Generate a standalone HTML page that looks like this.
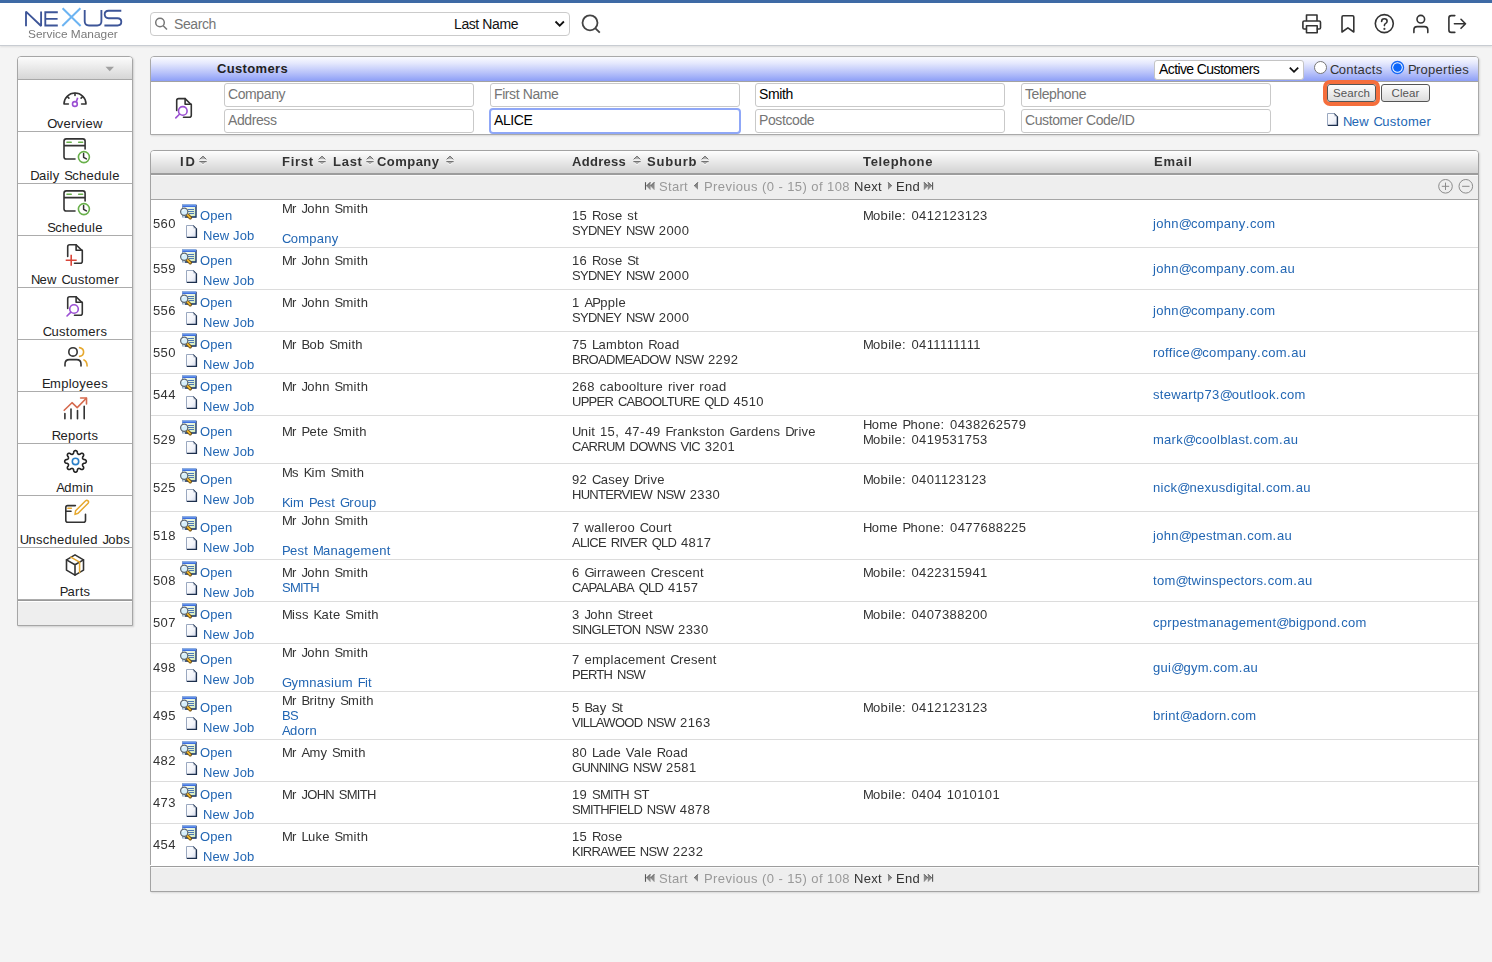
<!DOCTYPE html><html><head><meta charset="utf-8"><style>
*{box-sizing:border-box;margin:0;padding:0}
html,body{width:1492px;height:962px;overflow:hidden;background:#f4f4f4;font-family:"Liberation Sans",sans-serif;color:#333;font-size:13px}
.a{position:absolute}
.t{position:absolute;line-height:15px;height:15px;white-space:nowrap;letter-spacing:.12px;color:#333}
.lk{color:#2266b3}
.hd{position:absolute;font-weight:bold;line-height:15px;white-space:nowrap;letter-spacing:.3px;color:#333}
.sbt{position:absolute;left:17px;width:116px;text-align:center;line-height:15px;white-space:nowrap;letter-spacing:.1px;color:#222}
.inp{position:absolute;height:24px;width:251px;border:1px solid #c9c9c9;border-radius:3px;background:#fff}
.ph{position:absolute;font-size:14px;line-height:15px;white-space:nowrap;color:#757575;letter-spacing:-.4px}
.val{color:#000}
.rb{position:absolute;left:0;width:1327px;border-bottom:1px solid #ddd}
.pg{position:absolute;white-space:nowrap;line-height:15px;letter-spacing:.3px}
</style></head><body>
<div class="a" style="left:0;top:0;width:1492px;height:3px;background:#3e6aa5"></div>
<div class="a" style="left:0;top:3px;width:1492px;height:42px;background:#fff;box-shadow:0 1px 0 #c8ccd2,0 2px 2px rgba(0,0,0,.09)"></div>
<div class="a" style="left:150px;top:12px;width:420px;height:24px;border:1px solid #cbcbcb;border-radius:4px;background:#fff"></div>
<div class="ph" style="left:174px;top:17px">Search</div>
<div class="ph val" style="left:454px;top:17px;color:#111">Last Name</div>
<div class="a" style="left:17px;top:56px;width:116px;height:570px;border:1px solid #a6a6a6;border-radius:4px 4px 0 0;background:#fff;box-shadow:1px 1px 2px rgba(0,0,0,.15)"></div>
<div class="a" style="left:18px;top:57px;width:114px;height:23px;background:linear-gradient(#fcfcfc,#d6d6d6);border-bottom:1px solid #a8a8a8;border-radius:3px 3px 0 0"></div>
<div class="a" style="left:18px;top:131px;width:114px;height:1px;background:#acacac"></div>
<div class="a" style="left:18px;top:183px;width:114px;height:1px;background:#acacac"></div>
<div class="a" style="left:18px;top:235px;width:114px;height:1px;background:#acacac"></div>
<div class="a" style="left:18px;top:287px;width:114px;height:1px;background:#acacac"></div>
<div class="a" style="left:18px;top:339px;width:114px;height:1px;background:#acacac"></div>
<div class="a" style="left:18px;top:391px;width:114px;height:1px;background:#acacac"></div>
<div class="a" style="left:18px;top:443px;width:114px;height:1px;background:#acacac"></div>
<div class="a" style="left:18px;top:495px;width:114px;height:1px;background:#acacac"></div>
<div class="a" style="left:18px;top:547px;width:114px;height:1px;background:#acacac"></div>
<div class="a" style="left:18px;top:599px;width:114px;height:1px;background:#acacac"></div>
<div class="a" style="left:18px;top:600px;width:114px;height:1px;background:#999"></div>
<div class="a" style="left:18px;top:602px;width:114px;height:23px;background:#eee"></div>
<div class="sbt" style="top:116px;letter-spacing:0"><span style="letter-spacing:-0.72px">O</span><span style="letter-spacing:0.28px">verview</span></div>
<div class="sbt" style="top:168px;letter-spacing:0"><span style="letter-spacing:-0.72px">D</span><span style="letter-spacing:0.28px">aily</span><span style="letter-spacing:1.13px"> </span><span style="letter-spacing:-0.72px">S</span><span style="letter-spacing:0.28px">chedule</span></div>
<div class="sbt" style="top:220px;letter-spacing:0"><span style="letter-spacing:-0.72px">S</span><span style="letter-spacing:0.28px">chedule</span></div>
<div class="sbt" style="top:272px;letter-spacing:0"><span style="letter-spacing:-0.72px">N</span><span style="letter-spacing:0.28px">ew</span><span style="letter-spacing:1.13px"> </span><span style="letter-spacing:-0.72px">C</span><span style="letter-spacing:0.28px">ustomer</span></div>
<div class="sbt" style="top:324px;letter-spacing:0"><span style="letter-spacing:-0.72px">C</span><span style="letter-spacing:0.28px">ustomers</span></div>
<div class="sbt" style="top:376px;letter-spacing:0"><span style="letter-spacing:-0.72px">E</span><span style="letter-spacing:0.28px">mployees</span></div>
<div class="sbt" style="top:428px;letter-spacing:0"><span style="letter-spacing:-0.72px">R</span><span style="letter-spacing:0.28px">eports</span></div>
<div class="sbt" style="top:480px;letter-spacing:0"><span style="letter-spacing:-0.72px">A</span><span style="letter-spacing:0.28px">dmin</span></div>
<div class="sbt" style="top:532px;letter-spacing:0"><span style="letter-spacing:-0.72px">U</span><span style="letter-spacing:0.28px">nscheduled</span><span style="letter-spacing:1.13px"> </span><span style="letter-spacing:-0.72px">J</span><span style="letter-spacing:0.28px">obs</span></div>
<div class="sbt" style="top:584px;letter-spacing:0"><span style="letter-spacing:-0.72px">P</span><span style="letter-spacing:0.28px">arts</span></div>
<div class="a" style="left:150px;top:56px;width:1329px;height:79px;border:1px solid #a9a9a9;border-radius:4px 4px 0 0;background:#fff;box-shadow:1px 1px 2px rgba(0,0,0,.12)"></div>
<div class="a" style="left:151px;top:57px;width:1327px;height:25px;background:linear-gradient(#fafbff 0%,#e6e9fd 25%,#b9c3fa 65%,#8d9ff7 100%);border-bottom:1px solid #a2a2a2;border-radius:3px 3px 0 0"></div>
<div class="hd" style="left:217px;top:61px;letter-spacing:.35px;color:#222">Customers</div>
<div class="a" style="left:1154px;top:60px;width:150px;height:20px;border:1px solid #c4c4c4;border-radius:3px;background:#fff"></div>
<div class="ph" style="left:1159px;top:62px;color:#000;letter-spacing:-.6px">Active Customers</div>
<div class="t" style="left:1330px;top:62px;color:#333"><span style="letter-spacing:-0.72px">C</span><span style="letter-spacing:0.28px">ontacts</span></div>
<div class="t" style="left:1408px;top:62px;color:#333"><span style="letter-spacing:-0.72px">P</span><span style="letter-spacing:0.28px">roperties</span></div>
<div class="a" style="left:1314px;top:61px;width:13px;height:13px;border:1px solid #777;border-radius:50%;background:#fff"></div>
<svg class="a" style="left:1390px;top:60px" width="15" height="15"><circle cx="7.5" cy="7.5" r="6" fill="#fff" stroke="#1769f5" stroke-width="1.4"/><circle cx="7.5" cy="7.5" r="4.3" fill="#0b66fa"/></svg>
<div class="inp" style="left:224px;top:83px;width:250px"></div>
<div class="ph" style="left:228px;top:87px;">Company</div>
<div class="inp" style="left:490px;top:83px;width:250px"></div>
<div class="ph" style="left:494px;top:87px;">First Name</div>
<div class="inp" style="left:755px;top:83px;width:250px"></div>
<div class="ph" style="left:759px;top:87px;color:#000">Smith</div>
<div class="inp" style="left:1021px;top:83px;width:250px"></div>
<div class="ph" style="left:1025px;top:87px;">Telephone</div>
<div class="inp" style="left:224px;top:109px;width:250px"></div>
<div class="ph" style="left:228px;top:113px;">Address</div>
<div class="inp" style="left:489px;top:108px;width:252px;height:26px;border:2px solid #8fa7f7;border-radius:4px"></div>
<div class="ph" style="left:494px;top:113px;color:#000">ALICE</div>
<div class="inp" style="left:755px;top:109px;width:250px"></div>
<div class="ph" style="left:759px;top:113px;">Postcode</div>
<div class="inp" style="left:1021px;top:109px;width:250px"></div>
<div class="ph" style="left:1025px;top:113px;">Customer Code/ID</div>
<div class="a" style="left:1323px;top:80px;width:57px;height:26px;border:4px solid #f56e3c;border-radius:7px"></div>
<div class="a" style="left:1327px;top:84px;width:49px;height:18px;border:1px solid #555;border-radius:3px;background:linear-gradient(#fdfdfd,#dcdcdc)"></div>
<div class="a" style="left:1381px;top:84px;width:49px;height:18px;border:1px solid #555;border-radius:3px;background:linear-gradient(#fdfdfd,#dcdcdc)"></div>
<div class="a" style="left:1327px;top:86px;width:49px;text-align:center;font-size:11.5px;line-height:14px;color:#555;letter-spacing:.1px">Search</div>
<div class="a" style="left:1381px;top:86px;width:49px;text-align:center;font-size:11.5px;line-height:14px;color:#555;letter-spacing:.1px">Clear</div>
<div class="t lk" style="left:1343px;top:114px"><span style="letter-spacing:-0.72px">N</span><span style="letter-spacing:0.28px">ew</span><span style="letter-spacing:1.13px"> </span><span style="letter-spacing:-0.72px">C</span><span style="letter-spacing:0.28px">ustomer</span></div>
<div class="a" style="left:150px;top:150px;width:1329px;height:742px;border:1px solid #a3a3a3;border-radius:4px 4px 0 0;background:#fff;box-shadow:1px 1px 2px rgba(0,0,0,.12)"></div>
<div class="a" style="left:151px;top:151px;width:1327px;height:24px;background:linear-gradient(#fefefe,#d2d2d2);border-bottom:2px solid #9c9c9c;border-radius:3px 3px 0 0"></div>
<div class="a" style="left:151px;top:175px;width:1327px;height:24px;background:#eeeeee;border-top:1px solid #fafafa"></div>
<div class="a" style="left:151px;top:199px;width:1327px;height:1px;background:#a5a5a5"></div>
<div class="a" style="left:0;top:0;width:1492px;height:962px;will-change:transform">
<div class="hd" style="left:180px;top:154px;letter-spacing:1.8px">ID</div>
<div class="hd" style="left:282px;top:154px;letter-spacing:0.75px">First</div>
<div class="hd" style="left:333px;top:154px;letter-spacing:0.73px">Last</div>
<div class="hd" style="left:377px;top:154px;letter-spacing:0.45px">Company</div>
<div class="hd" style="left:572px;top:154px;letter-spacing:0.3px">Address</div>
<div class="hd" style="left:647px;top:154px;letter-spacing:0.8px">Suburb</div>
<div class="hd" style="left:863px;top:154px;letter-spacing:0.67px">Telephone</div>
<div class="hd" style="left:1154px;top:154px;letter-spacing:0.8px">Email</div>
<div class="pg" style="left:659px;top:179px;color:#999">Start</div>
<div class="pg" style="left:704px;top:179px;color:#999;letter-spacing:.42px">Previous (0 - 15) of 108</div>
<div class="pg" style="left:854px;top:179px;color:#333">Next</div>
<div class="pg" style="left:896px;top:179px;color:#333">End</div>
<div class="a" style="left:151px;top:247px;width:1327px;height:1px;background:#dcdcdc"></div>
<div class="t" style="left:153px;top:216.0px"><span style="letter-spacing:0.39px">560</span></div>
<div class="t" style="left:282px;top:201.0px"><span style="letter-spacing:-0.72px">M</span><span style="letter-spacing:0.28px">r</span><span style="letter-spacing:1.13px"> </span><span style="letter-spacing:-0.72px">J</span><span style="letter-spacing:0.28px">ohn</span><span style="letter-spacing:1.13px"> </span><span style="letter-spacing:-0.72px">S</span><span style="letter-spacing:0.28px">mith</span></div>
<div class="t lk" style="left:282px;top:231.0px"><span style="letter-spacing:-0.72px">C</span><span style="letter-spacing:0.28px">ompany</span></div>
<div class="t" style="left:572px;top:208.0px"><span style="letter-spacing:0.39px">15</span><span style="letter-spacing:1.13px"> </span><span style="letter-spacing:-0.72px">R</span><span style="letter-spacing:0.28px">ose</span><span style="letter-spacing:1.13px"> </span><span style="letter-spacing:0.28px">st</span></div>
<div class="t" style="left:572px;top:223.0px"><span style="letter-spacing:-0.72px">SYDNEY</span><span style="letter-spacing:1.13px"> </span><span style="letter-spacing:-0.72px">NSW</span><span style="letter-spacing:1.13px"> </span><span style="letter-spacing:0.39px">2000</span></div>
<div class="t" style="left:863px;top:208.0px"><span style="letter-spacing:-0.72px">M</span><span style="letter-spacing:0.28px">obile</span><span style="letter-spacing:1.13px">: </span><span style="letter-spacing:0.39px">0412123123</span></div>
<div class="t lk" style="left:1153px;top:216.0px"><span style="letter-spacing:0.28px">john</span><span style="letter-spacing:-1.0px">@</span><span style="letter-spacing:0.28px">company</span><span style="letter-spacing:0.8px">.</span><span style="letter-spacing:0.28px">com</span></div>
<div class="t lk" style="left:200px;top:208.0px">Open</div>
<div class="t lk" style="left:203px;top:228.0px">New Job</div>
<div class="a" style="left:151px;top:289px;width:1327px;height:1px;background:#dcdcdc"></div>
<div class="t" style="left:153px;top:261.0px"><span style="letter-spacing:0.39px">559</span></div>
<div class="t" style="left:282px;top:253.0px"><span style="letter-spacing:-0.72px">M</span><span style="letter-spacing:0.28px">r</span><span style="letter-spacing:1.13px"> </span><span style="letter-spacing:-0.72px">J</span><span style="letter-spacing:0.28px">ohn</span><span style="letter-spacing:1.13px"> </span><span style="letter-spacing:-0.72px">S</span><span style="letter-spacing:0.28px">mith</span></div>
<div class="t" style="left:572px;top:253.0px"><span style="letter-spacing:0.39px">16</span><span style="letter-spacing:1.13px"> </span><span style="letter-spacing:-0.72px">R</span><span style="letter-spacing:0.28px">ose</span><span style="letter-spacing:1.13px"> </span><span style="letter-spacing:-0.72px">S</span><span style="letter-spacing:0.28px">t</span></div>
<div class="t" style="left:572px;top:268.0px"><span style="letter-spacing:-0.72px">SYDNEY</span><span style="letter-spacing:1.13px"> </span><span style="letter-spacing:-0.72px">NSW</span><span style="letter-spacing:1.13px"> </span><span style="letter-spacing:0.39px">2000</span></div>
<div class="t lk" style="left:1153px;top:261.0px"><span style="letter-spacing:0.28px">john</span><span style="letter-spacing:-1.0px">@</span><span style="letter-spacing:0.28px">company</span><span style="letter-spacing:0.8px">.</span><span style="letter-spacing:0.28px">com</span><span style="letter-spacing:0.8px">.</span><span style="letter-spacing:0.28px">au</span></div>
<div class="t lk" style="left:200px;top:253.0px">Open</div>
<div class="t lk" style="left:203px;top:273.0px">New Job</div>
<div class="a" style="left:151px;top:331px;width:1327px;height:1px;background:#dcdcdc"></div>
<div class="t" style="left:153px;top:303.0px"><span style="letter-spacing:0.39px">556</span></div>
<div class="t" style="left:282px;top:295.0px"><span style="letter-spacing:-0.72px">M</span><span style="letter-spacing:0.28px">r</span><span style="letter-spacing:1.13px"> </span><span style="letter-spacing:-0.72px">J</span><span style="letter-spacing:0.28px">ohn</span><span style="letter-spacing:1.13px"> </span><span style="letter-spacing:-0.72px">S</span><span style="letter-spacing:0.28px">mith</span></div>
<div class="t" style="left:572px;top:295.0px"><span style="letter-spacing:0.39px">1</span><span style="letter-spacing:1.13px"> </span><span style="letter-spacing:-0.72px">AP</span><span style="letter-spacing:0.28px">pple</span></div>
<div class="t" style="left:572px;top:310.0px"><span style="letter-spacing:-0.72px">SYDNEY</span><span style="letter-spacing:1.13px"> </span><span style="letter-spacing:-0.72px">NSW</span><span style="letter-spacing:1.13px"> </span><span style="letter-spacing:0.39px">2000</span></div>
<div class="t lk" style="left:1153px;top:303.0px"><span style="letter-spacing:0.28px">john</span><span style="letter-spacing:-1.0px">@</span><span style="letter-spacing:0.28px">company</span><span style="letter-spacing:0.8px">.</span><span style="letter-spacing:0.28px">com</span></div>
<div class="t lk" style="left:200px;top:295.0px">Open</div>
<div class="t lk" style="left:203px;top:315.0px">New Job</div>
<div class="a" style="left:151px;top:373px;width:1327px;height:1px;background:#dcdcdc"></div>
<div class="t" style="left:153px;top:345.0px"><span style="letter-spacing:0.39px">550</span></div>
<div class="t" style="left:282px;top:337.0px"><span style="letter-spacing:-0.72px">M</span><span style="letter-spacing:0.28px">r</span><span style="letter-spacing:1.13px"> </span><span style="letter-spacing:-0.72px">B</span><span style="letter-spacing:0.28px">ob</span><span style="letter-spacing:1.13px"> </span><span style="letter-spacing:-0.72px">S</span><span style="letter-spacing:0.28px">mith</span></div>
<div class="t" style="left:572px;top:337.0px"><span style="letter-spacing:0.39px">75</span><span style="letter-spacing:1.13px"> </span><span style="letter-spacing:-0.72px">L</span><span style="letter-spacing:0.28px">ambton</span><span style="letter-spacing:1.13px"> </span><span style="letter-spacing:-0.72px">R</span><span style="letter-spacing:0.28px">oad</span></div>
<div class="t" style="left:572px;top:352.0px"><span style="letter-spacing:-0.72px">BROADMEADOW</span><span style="letter-spacing:1.13px"> </span><span style="letter-spacing:-0.72px">NSW</span><span style="letter-spacing:1.13px"> </span><span style="letter-spacing:0.39px">2292</span></div>
<div class="t" style="left:863px;top:337.0px"><span style="letter-spacing:-0.72px">M</span><span style="letter-spacing:0.28px">obile</span><span style="letter-spacing:1.13px">: </span><span style="letter-spacing:0.39px">0411111111</span></div>
<div class="t lk" style="left:1153px;top:345.0px"><span style="letter-spacing:0.28px">roffice</span><span style="letter-spacing:-1.0px">@</span><span style="letter-spacing:0.28px">company</span><span style="letter-spacing:0.8px">.</span><span style="letter-spacing:0.28px">com</span><span style="letter-spacing:0.8px">.</span><span style="letter-spacing:0.28px">au</span></div>
<div class="t lk" style="left:200px;top:337.0px">Open</div>
<div class="t lk" style="left:203px;top:357.0px">New Job</div>
<div class="a" style="left:151px;top:415px;width:1327px;height:1px;background:#dcdcdc"></div>
<div class="t" style="left:153px;top:387.0px"><span style="letter-spacing:0.39px">544</span></div>
<div class="t" style="left:282px;top:379.0px"><span style="letter-spacing:-0.72px">M</span><span style="letter-spacing:0.28px">r</span><span style="letter-spacing:1.13px"> </span><span style="letter-spacing:-0.72px">J</span><span style="letter-spacing:0.28px">ohn</span><span style="letter-spacing:1.13px"> </span><span style="letter-spacing:-0.72px">S</span><span style="letter-spacing:0.28px">mith</span></div>
<div class="t" style="left:572px;top:379.0px"><span style="letter-spacing:0.39px">268</span><span style="letter-spacing:1.13px"> </span><span style="letter-spacing:0.28px">caboolture</span><span style="letter-spacing:1.13px"> </span><span style="letter-spacing:0.28px">river</span><span style="letter-spacing:1.13px"> </span><span style="letter-spacing:0.28px">road</span></div>
<div class="t" style="left:572px;top:394.0px"><span style="letter-spacing:-0.72px">UPPER</span><span style="letter-spacing:1.13px"> </span><span style="letter-spacing:-0.72px">CABOOLTURE</span><span style="letter-spacing:1.13px"> </span><span style="letter-spacing:-0.72px">QLD</span><span style="letter-spacing:1.13px"> </span><span style="letter-spacing:0.39px">4510</span></div>
<div class="t lk" style="left:1153px;top:387.0px"><span style="letter-spacing:0.28px">stewartp</span><span style="letter-spacing:0.39px">73</span><span style="letter-spacing:-1.0px">@</span><span style="letter-spacing:0.28px">outlook</span><span style="letter-spacing:0.8px">.</span><span style="letter-spacing:0.28px">com</span></div>
<div class="t lk" style="left:200px;top:379.0px">Open</div>
<div class="t lk" style="left:203px;top:399.0px">New Job</div>
<div class="a" style="left:151px;top:463px;width:1327px;height:1px;background:#dcdcdc"></div>
<div class="t" style="left:153px;top:432.0px"><span style="letter-spacing:0.39px">529</span></div>
<div class="t" style="left:282px;top:424.0px"><span style="letter-spacing:-0.72px">M</span><span style="letter-spacing:0.28px">r</span><span style="letter-spacing:1.13px"> </span><span style="letter-spacing:-0.72px">P</span><span style="letter-spacing:0.28px">ete</span><span style="letter-spacing:1.13px"> </span><span style="letter-spacing:-0.72px">S</span><span style="letter-spacing:0.28px">mith</span></div>
<div class="t" style="left:572px;top:424.0px"><span style="letter-spacing:-0.72px">U</span><span style="letter-spacing:0.28px">nit</span><span style="letter-spacing:1.13px"> </span><span style="letter-spacing:0.39px">15</span><span style="letter-spacing:1.13px">, </span><span style="letter-spacing:0.39px">47</span><span style="letter-spacing:1.13px">-</span><span style="letter-spacing:0.39px">49</span><span style="letter-spacing:1.13px"> </span><span style="letter-spacing:-0.72px">F</span><span style="letter-spacing:0.28px">rankston</span><span style="letter-spacing:1.13px"> </span><span style="letter-spacing:-0.72px">G</span><span style="letter-spacing:0.28px">ardens</span><span style="letter-spacing:1.13px"> </span><span style="letter-spacing:-0.72px">D</span><span style="letter-spacing:0.28px">rive</span></div>
<div class="t" style="left:572px;top:439.0px"><span style="letter-spacing:-0.72px">CARRUM</span><span style="letter-spacing:1.13px"> </span><span style="letter-spacing:-0.72px">DOWNS</span><span style="letter-spacing:1.13px"> </span><span style="letter-spacing:-0.72px">VIC</span><span style="letter-spacing:1.13px"> </span><span style="letter-spacing:0.39px">3201</span></div>
<div class="t" style="left:863px;top:417.0px"><span style="letter-spacing:-0.72px">H</span><span style="letter-spacing:0.28px">ome</span><span style="letter-spacing:1.13px"> </span><span style="letter-spacing:-0.72px">P</span><span style="letter-spacing:0.28px">hone</span><span style="letter-spacing:1.13px">: </span><span style="letter-spacing:0.39px">0438262579</span></div>
<div class="t" style="left:863px;top:432.0px"><span style="letter-spacing:-0.72px">M</span><span style="letter-spacing:0.28px">obile</span><span style="letter-spacing:1.13px">: </span><span style="letter-spacing:0.39px">0419531753</span></div>
<div class="t lk" style="left:1153px;top:432.0px"><span style="letter-spacing:0.28px">mark</span><span style="letter-spacing:-1.0px">@</span><span style="letter-spacing:0.28px">coolblast</span><span style="letter-spacing:0.8px">.</span><span style="letter-spacing:0.28px">com</span><span style="letter-spacing:0.8px">.</span><span style="letter-spacing:0.28px">au</span></div>
<div class="t lk" style="left:200px;top:424.0px">Open</div>
<div class="t lk" style="left:203px;top:444.0px">New Job</div>
<div class="a" style="left:151px;top:511px;width:1327px;height:1px;background:#dcdcdc"></div>
<div class="t" style="left:153px;top:480.0px"><span style="letter-spacing:0.39px">525</span></div>
<div class="t" style="left:282px;top:465.0px"><span style="letter-spacing:-0.72px">M</span><span style="letter-spacing:0.28px">s</span><span style="letter-spacing:1.13px"> </span><span style="letter-spacing:-0.72px">K</span><span style="letter-spacing:0.28px">im</span><span style="letter-spacing:1.13px"> </span><span style="letter-spacing:-0.72px">S</span><span style="letter-spacing:0.28px">mith</span></div>
<div class="t lk" style="left:282px;top:495.0px"><span style="letter-spacing:-0.72px">K</span><span style="letter-spacing:0.28px">im</span><span style="letter-spacing:1.13px"> </span><span style="letter-spacing:-0.72px">P</span><span style="letter-spacing:0.28px">est</span><span style="letter-spacing:1.13px"> </span><span style="letter-spacing:-0.72px">G</span><span style="letter-spacing:0.28px">roup</span></div>
<div class="t" style="left:572px;top:472.0px"><span style="letter-spacing:0.39px">92</span><span style="letter-spacing:1.13px"> </span><span style="letter-spacing:-0.72px">C</span><span style="letter-spacing:0.28px">asey</span><span style="letter-spacing:1.13px"> </span><span style="letter-spacing:-0.72px">D</span><span style="letter-spacing:0.28px">rive</span></div>
<div class="t" style="left:572px;top:487.0px"><span style="letter-spacing:-0.72px">HUNTERVIEW</span><span style="letter-spacing:1.13px"> </span><span style="letter-spacing:-0.72px">NSW</span><span style="letter-spacing:1.13px"> </span><span style="letter-spacing:0.39px">2330</span></div>
<div class="t" style="left:863px;top:472.0px"><span style="letter-spacing:-0.72px">M</span><span style="letter-spacing:0.28px">obile</span><span style="letter-spacing:1.13px">: </span><span style="letter-spacing:0.39px">0401123123</span></div>
<div class="t lk" style="left:1153px;top:480.0px"><span style="letter-spacing:0.28px">nick</span><span style="letter-spacing:-1.0px">@</span><span style="letter-spacing:0.28px">nexusdigital</span><span style="letter-spacing:0.8px">.</span><span style="letter-spacing:0.28px">com</span><span style="letter-spacing:0.8px">.</span><span style="letter-spacing:0.28px">au</span></div>
<div class="t lk" style="left:200px;top:472.0px">Open</div>
<div class="t lk" style="left:203px;top:492.0px">New Job</div>
<div class="a" style="left:151px;top:559px;width:1327px;height:1px;background:#dcdcdc"></div>
<div class="t" style="left:153px;top:528.0px"><span style="letter-spacing:0.39px">518</span></div>
<div class="t" style="left:282px;top:513.0px"><span style="letter-spacing:-0.72px">M</span><span style="letter-spacing:0.28px">r</span><span style="letter-spacing:1.13px"> </span><span style="letter-spacing:-0.72px">J</span><span style="letter-spacing:0.28px">ohn</span><span style="letter-spacing:1.13px"> </span><span style="letter-spacing:-0.72px">S</span><span style="letter-spacing:0.28px">mith</span></div>
<div class="t lk" style="left:282px;top:543.0px"><span style="letter-spacing:-0.72px">P</span><span style="letter-spacing:0.28px">est</span><span style="letter-spacing:1.13px"> </span><span style="letter-spacing:-0.72px">M</span><span style="letter-spacing:0.28px">anagement</span></div>
<div class="t" style="left:572px;top:520.0px"><span style="letter-spacing:0.39px">7</span><span style="letter-spacing:1.13px"> </span><span style="letter-spacing:0.28px">walleroo</span><span style="letter-spacing:1.13px"> </span><span style="letter-spacing:-0.72px">C</span><span style="letter-spacing:0.28px">ourt</span></div>
<div class="t" style="left:572px;top:535.0px"><span style="letter-spacing:-0.72px">ALICE</span><span style="letter-spacing:1.13px"> </span><span style="letter-spacing:-0.72px">RIVER</span><span style="letter-spacing:1.13px"> </span><span style="letter-spacing:-0.72px">QLD</span><span style="letter-spacing:1.13px"> </span><span style="letter-spacing:0.39px">4817</span></div>
<div class="t" style="left:863px;top:520.0px"><span style="letter-spacing:-0.72px">H</span><span style="letter-spacing:0.28px">ome</span><span style="letter-spacing:1.13px"> </span><span style="letter-spacing:-0.72px">P</span><span style="letter-spacing:0.28px">hone</span><span style="letter-spacing:1.13px">: </span><span style="letter-spacing:0.39px">0477688225</span></div>
<div class="t lk" style="left:1153px;top:528.0px"><span style="letter-spacing:0.28px">john</span><span style="letter-spacing:-1.0px">@</span><span style="letter-spacing:0.28px">pestman</span><span style="letter-spacing:0.8px">.</span><span style="letter-spacing:0.28px">com</span><span style="letter-spacing:0.8px">.</span><span style="letter-spacing:0.28px">au</span></div>
<div class="t lk" style="left:200px;top:520.0px">Open</div>
<div class="t lk" style="left:203px;top:540.0px">New Job</div>
<div class="a" style="left:151px;top:601px;width:1327px;height:1px;background:#dcdcdc"></div>
<div class="t" style="left:153px;top:573.0px"><span style="letter-spacing:0.39px">508</span></div>
<div class="t" style="left:282px;top:565.0px"><span style="letter-spacing:-0.72px">M</span><span style="letter-spacing:0.28px">r</span><span style="letter-spacing:1.13px"> </span><span style="letter-spacing:-0.72px">J</span><span style="letter-spacing:0.28px">ohn</span><span style="letter-spacing:1.13px"> </span><span style="letter-spacing:-0.72px">S</span><span style="letter-spacing:0.28px">mith</span></div>
<div class="t lk" style="left:282px;top:580.0px"><span style="letter-spacing:-0.72px">SMITH</span></div>
<div class="t" style="left:572px;top:565.0px"><span style="letter-spacing:0.39px">6</span><span style="letter-spacing:1.13px"> </span><span style="letter-spacing:-0.72px">G</span><span style="letter-spacing:0.28px">irraween</span><span style="letter-spacing:1.13px"> </span><span style="letter-spacing:-0.72px">C</span><span style="letter-spacing:0.28px">rescent</span></div>
<div class="t" style="left:572px;top:580.0px"><span style="letter-spacing:-0.72px">CAPALABA</span><span style="letter-spacing:1.13px"> </span><span style="letter-spacing:-0.72px">QLD</span><span style="letter-spacing:1.13px"> </span><span style="letter-spacing:0.39px">4157</span></div>
<div class="t" style="left:863px;top:565.0px"><span style="letter-spacing:-0.72px">M</span><span style="letter-spacing:0.28px">obile</span><span style="letter-spacing:1.13px">: </span><span style="letter-spacing:0.39px">0422315941</span></div>
<div class="t lk" style="left:1153px;top:573.0px"><span style="letter-spacing:0.28px">tom</span><span style="letter-spacing:-1.0px">@</span><span style="letter-spacing:0.28px">twinspectors</span><span style="letter-spacing:0.8px">.</span><span style="letter-spacing:0.28px">com</span><span style="letter-spacing:0.8px">.</span><span style="letter-spacing:0.28px">au</span></div>
<div class="t lk" style="left:200px;top:565.0px">Open</div>
<div class="t lk" style="left:203px;top:585.0px">New Job</div>
<div class="a" style="left:151px;top:643px;width:1327px;height:1px;background:#dcdcdc"></div>
<div class="t" style="left:153px;top:615.0px"><span style="letter-spacing:0.39px">507</span></div>
<div class="t" style="left:282px;top:607.0px"><span style="letter-spacing:-0.72px">M</span><span style="letter-spacing:0.28px">iss</span><span style="letter-spacing:1.13px"> </span><span style="letter-spacing:-0.72px">K</span><span style="letter-spacing:0.28px">ate</span><span style="letter-spacing:1.13px"> </span><span style="letter-spacing:-0.72px">S</span><span style="letter-spacing:0.28px">mith</span></div>
<div class="t" style="left:572px;top:607.0px"><span style="letter-spacing:0.39px">3</span><span style="letter-spacing:1.13px"> </span><span style="letter-spacing:-0.72px">J</span><span style="letter-spacing:0.28px">ohn</span><span style="letter-spacing:1.13px"> </span><span style="letter-spacing:-0.72px">S</span><span style="letter-spacing:0.28px">treet</span></div>
<div class="t" style="left:572px;top:622.0px"><span style="letter-spacing:-0.72px">SINGLETON</span><span style="letter-spacing:1.13px"> </span><span style="letter-spacing:-0.72px">NSW</span><span style="letter-spacing:1.13px"> </span><span style="letter-spacing:0.39px">2330</span></div>
<div class="t" style="left:863px;top:607.0px"><span style="letter-spacing:-0.72px">M</span><span style="letter-spacing:0.28px">obile</span><span style="letter-spacing:1.13px">: </span><span style="letter-spacing:0.39px">0407388200</span></div>
<div class="t lk" style="left:1153px;top:615.0px"><span style="letter-spacing:0.28px">cprpestmanagement</span><span style="letter-spacing:-1.0px">@</span><span style="letter-spacing:0.28px">bigpond</span><span style="letter-spacing:0.8px">.</span><span style="letter-spacing:0.28px">com</span></div>
<div class="t lk" style="left:200px;top:607.0px">Open</div>
<div class="t lk" style="left:203px;top:627.0px">New Job</div>
<div class="a" style="left:151px;top:691px;width:1327px;height:1px;background:#dcdcdc"></div>
<div class="t" style="left:153px;top:660.0px"><span style="letter-spacing:0.39px">498</span></div>
<div class="t" style="left:282px;top:645.0px"><span style="letter-spacing:-0.72px">M</span><span style="letter-spacing:0.28px">r</span><span style="letter-spacing:1.13px"> </span><span style="letter-spacing:-0.72px">J</span><span style="letter-spacing:0.28px">ohn</span><span style="letter-spacing:1.13px"> </span><span style="letter-spacing:-0.72px">S</span><span style="letter-spacing:0.28px">mith</span></div>
<div class="t lk" style="left:282px;top:675.0px"><span style="letter-spacing:-0.72px">G</span><span style="letter-spacing:0.28px">ymnasium</span><span style="letter-spacing:1.13px"> </span><span style="letter-spacing:-0.72px">F</span><span style="letter-spacing:0.28px">it</span></div>
<div class="t" style="left:572px;top:652.0px"><span style="letter-spacing:0.39px">7</span><span style="letter-spacing:1.13px"> </span><span style="letter-spacing:0.28px">emplacement</span><span style="letter-spacing:1.13px"> </span><span style="letter-spacing:-0.72px">C</span><span style="letter-spacing:0.28px">resent</span></div>
<div class="t" style="left:572px;top:667.0px"><span style="letter-spacing:-0.72px">PERTH</span><span style="letter-spacing:1.13px"> </span><span style="letter-spacing:-0.72px">NSW</span></div>
<div class="t lk" style="left:1153px;top:660.0px"><span style="letter-spacing:0.28px">gui</span><span style="letter-spacing:-1.0px">@</span><span style="letter-spacing:0.28px">gym</span><span style="letter-spacing:0.8px">.</span><span style="letter-spacing:0.28px">com</span><span style="letter-spacing:0.8px">.</span><span style="letter-spacing:0.28px">au</span></div>
<div class="t lk" style="left:200px;top:652.0px">Open</div>
<div class="t lk" style="left:203px;top:672.0px">New Job</div>
<div class="a" style="left:151px;top:739px;width:1327px;height:1px;background:#dcdcdc"></div>
<div class="t" style="left:153px;top:708.0px"><span style="letter-spacing:0.39px">495</span></div>
<div class="t" style="left:282px;top:693.0px"><span style="letter-spacing:-0.72px">M</span><span style="letter-spacing:0.28px">r</span><span style="letter-spacing:1.13px"> </span><span style="letter-spacing:-0.72px">B</span><span style="letter-spacing:0.28px">ritny</span><span style="letter-spacing:1.13px"> </span><span style="letter-spacing:-0.72px">S</span><span style="letter-spacing:0.28px">mith</span></div>
<div class="t lk" style="left:282px;top:708.0px"><span style="letter-spacing:-0.72px">BS</span></div>
<div class="t lk" style="left:282px;top:723.0px"><span style="letter-spacing:-0.72px">A</span><span style="letter-spacing:0.28px">dorn</span></div>
<div class="t" style="left:572px;top:700.0px"><span style="letter-spacing:0.39px">5</span><span style="letter-spacing:1.13px"> </span><span style="letter-spacing:-0.72px">B</span><span style="letter-spacing:0.28px">ay</span><span style="letter-spacing:1.13px"> </span><span style="letter-spacing:-0.72px">S</span><span style="letter-spacing:0.28px">t</span></div>
<div class="t" style="left:572px;top:715.0px"><span style="letter-spacing:-0.72px">VILLAWOOD</span><span style="letter-spacing:1.13px"> </span><span style="letter-spacing:-0.72px">NSW</span><span style="letter-spacing:1.13px"> </span><span style="letter-spacing:0.39px">2163</span></div>
<div class="t" style="left:863px;top:700.0px"><span style="letter-spacing:-0.72px">M</span><span style="letter-spacing:0.28px">obile</span><span style="letter-spacing:1.13px">: </span><span style="letter-spacing:0.39px">0412123123</span></div>
<div class="t lk" style="left:1153px;top:708.0px"><span style="letter-spacing:0.28px">brint</span><span style="letter-spacing:-1.0px">@</span><span style="letter-spacing:0.28px">adorn</span><span style="letter-spacing:0.8px">.</span><span style="letter-spacing:0.28px">com</span></div>
<div class="t lk" style="left:200px;top:700.0px">Open</div>
<div class="t lk" style="left:203px;top:720.0px">New Job</div>
<div class="a" style="left:151px;top:781px;width:1327px;height:1px;background:#dcdcdc"></div>
<div class="t" style="left:153px;top:753.0px"><span style="letter-spacing:0.39px">482</span></div>
<div class="t" style="left:282px;top:745.0px"><span style="letter-spacing:-0.72px">M</span><span style="letter-spacing:0.28px">r</span><span style="letter-spacing:1.13px"> </span><span style="letter-spacing:-0.72px">A</span><span style="letter-spacing:0.28px">my</span><span style="letter-spacing:1.13px"> </span><span style="letter-spacing:-0.72px">S</span><span style="letter-spacing:0.28px">mith</span></div>
<div class="t" style="left:572px;top:745.0px"><span style="letter-spacing:0.39px">80</span><span style="letter-spacing:1.13px"> </span><span style="letter-spacing:-0.72px">L</span><span style="letter-spacing:0.28px">ade</span><span style="letter-spacing:1.13px"> </span><span style="letter-spacing:-0.72px">V</span><span style="letter-spacing:0.28px">ale</span><span style="letter-spacing:1.13px"> </span><span style="letter-spacing:-0.72px">R</span><span style="letter-spacing:0.28px">oad</span></div>
<div class="t" style="left:572px;top:760.0px"><span style="letter-spacing:-0.72px">GUNNING</span><span style="letter-spacing:1.13px"> </span><span style="letter-spacing:-0.72px">NSW</span><span style="letter-spacing:1.13px"> </span><span style="letter-spacing:0.39px">2581</span></div>
<div class="t lk" style="left:200px;top:745.0px">Open</div>
<div class="t lk" style="left:203px;top:765.0px">New Job</div>
<div class="a" style="left:151px;top:823px;width:1327px;height:1px;background:#dcdcdc"></div>
<div class="t" style="left:153px;top:795.0px"><span style="letter-spacing:0.39px">473</span></div>
<div class="t" style="left:282px;top:787.0px"><span style="letter-spacing:-0.72px">M</span><span style="letter-spacing:0.28px">r</span><span style="letter-spacing:1.13px"> </span><span style="letter-spacing:-0.72px">JOHN</span><span style="letter-spacing:1.13px"> </span><span style="letter-spacing:-0.72px">SMITH</span></div>
<div class="t" style="left:572px;top:787.0px"><span style="letter-spacing:0.39px">19</span><span style="letter-spacing:1.13px"> </span><span style="letter-spacing:-0.72px">SMITH</span><span style="letter-spacing:1.13px"> </span><span style="letter-spacing:-0.72px">ST</span></div>
<div class="t" style="left:572px;top:802.0px"><span style="letter-spacing:-0.72px">SMITHFIELD</span><span style="letter-spacing:1.13px"> </span><span style="letter-spacing:-0.72px">NSW</span><span style="letter-spacing:1.13px"> </span><span style="letter-spacing:0.39px">4878</span></div>
<div class="t" style="left:863px;top:787.0px"><span style="letter-spacing:-0.72px">M</span><span style="letter-spacing:0.28px">obile</span><span style="letter-spacing:1.13px">: </span><span style="letter-spacing:0.39px">0404</span><span style="letter-spacing:1.13px"> </span><span style="letter-spacing:0.39px">1010101</span></div>
<div class="t lk" style="left:200px;top:787.0px">Open</div>
<div class="t lk" style="left:203px;top:807.0px">New Job</div>
<div class="a" style="left:151px;top:865px;width:1327px;height:1px;background:#fff"></div>
<div class="t" style="left:153px;top:837.0px"><span style="letter-spacing:0.39px">454</span></div>
<div class="t" style="left:282px;top:829.0px"><span style="letter-spacing:-0.72px">M</span><span style="letter-spacing:0.28px">r</span><span style="letter-spacing:1.13px"> </span><span style="letter-spacing:-0.72px">L</span><span style="letter-spacing:0.28px">uke</span><span style="letter-spacing:1.13px"> </span><span style="letter-spacing:-0.72px">S</span><span style="letter-spacing:0.28px">mith</span></div>
<div class="t" style="left:572px;top:829.0px"><span style="letter-spacing:0.39px">15</span><span style="letter-spacing:1.13px"> </span><span style="letter-spacing:-0.72px">R</span><span style="letter-spacing:0.28px">ose</span></div>
<div class="t" style="left:572px;top:844.0px"><span style="letter-spacing:-0.72px">KIRRAWEE</span><span style="letter-spacing:1.13px"> </span><span style="letter-spacing:-0.72px">NSW</span><span style="letter-spacing:1.13px"> </span><span style="letter-spacing:0.39px">2232</span></div>
<div class="t lk" style="left:200px;top:829.0px">Open</div>
<div class="t lk" style="left:203px;top:849.0px">New Job</div>
<div class="a" style="left:150px;top:865px;width:1329px;height:1px;background:#fff"></div>
<div class="a" style="left:151px;top:866px;width:1327px;height:1px;background:#9d9d9d"></div>
<div class="a" style="left:151px;top:867px;width:1327px;height:24px;background:#eee;border-top:1px solid #fafafa"></div>
<div class="pg" style="left:659px;top:871px;color:#999">Start</div>
<div class="pg" style="left:704px;top:871px;color:#999;letter-spacing:.42px">Previous (0 - 15) of 108</div>
<div class="pg" style="left:854px;top:871px;color:#333">Next</div>
<div class="pg" style="left:896px;top:871px;color:#333">End</div>
</div>

<svg class="a" style="left:0;top:0" width="1492" height="962" viewBox="0 0 1492 962"><g fill="none" stroke-width="1.85" stroke-linecap="butt"><path d="M26,26.2 V11.6 L41.1,26 V11.4" stroke="#3d5598" stroke-linejoin="bevel"/><path d="M57.8,12.2 H45.3 V25.5 H57.8 M45.3,18.8 H57.6" stroke="#3d5598"/><path d="M62.3,26 L80.4,8.3 M62.6,8.3 L80.6,26" stroke="#6cb4f2" stroke-width="2"/><path d="M84.7,10 V21.3 Q84.7,25.5 89,25.5 H97.2 Q101.4,25.5 101.4,21.3 V10" stroke="#3d5598"/><path d="M121.3,10.7 H108.6 Q104.7,10.7 104.7,14.3 Q104.7,18.2 108.6,18.2 H117.5 Q121.3,18.2 121.3,21.8 Q121.3,25.5 117.5,25.5 H104.4" stroke="#3d5598"/></g><g fill="none" stroke="#777" stroke-width="1.5"><circle cx="160" cy="22.5" r="4.3"/><path d="M163.2,25.8 L167,29.5"/></g><path d="M555.5,21.5 L559.7,25.7 L563.9,21.5" fill="none" stroke="#111" stroke-width="1.8"/><g fill="none" stroke="#444" stroke-width="1.8"><circle cx="590" cy="22.8" r="7.5"/><path d="M595.4,28.3 L599.8,32.6"/></g><g fill="none" stroke="#333" stroke-width="1.6" stroke-linecap="round" stroke-linejoin="round" stroke="#444" stroke-width="1.9"><path d="M1306.5,20.5 V15 H1317 V20.5"/><path d="M1306,29 H1304.2 Q1302.9,29 1302.9,27.7 V22.3 Q1302.9,21 1304.2,21 H1319.2 Q1320.5,21 1320.5,22.3 V27.7 Q1320.5,29 1319.2,29 H1317.3"/><rect x="1306.5" y="25.8" width="10.7" height="7"/><path d="M1342,32 V17 Q1342,15.8 1343.2,15.8 H1352.6 Q1353.8,15.8 1353.8,17 V32 L1347.9,27.8 Z"/><circle cx="1384.3" cy="23.6" r="9"/><path d="M1381.6,21.4 Q1381.6,18.8 1384.4,18.8 Q1387.1,18.8 1387.1,21.2 Q1387.1,22.8 1385.4,23.6 Q1384.4,24.1 1384.4,25.6"/><circle cx="1420.8" cy="19.2" r="3.8"/><path d="M1413.9,32.6 V29.8 Q1413.9,26.6 1417.1,26.6 H1424.6 Q1427.8,26.6 1427.8,29.8 V32.6"/><path d="M1454.8,15.6 H1451.3 Q1448.9,15.6 1448.9,18 V30 Q1448.9,32.4 1451.3,32.4 H1454.8"/><path d="M1454.4,23.8 H1465.3 M1461,19.3 L1465.5,23.8 L1461,28.3"/></g><circle cx="1384.4" cy="28.9" r="1.1" fill="#444"/><path d="M105.5,66.8 H114 L109.75,71.2 Z" fill="#a0a0a0"/><g fill="none" stroke="#333" stroke-width="1.6" stroke-linecap="round" stroke-linejoin="round" stroke="#222"><path d="M68.4,104 H64 A11,11 0 0 1 86,104 H81.6" /><path d="M75,93.4 V95.4 M67.4,96.6 L68.9,98.1 M82.6,96.6 L81.1,98.1"/></g><g fill="none" stroke="#9b4fd3" stroke-width="1.6"><circle cx="74.9" cy="104" r="2.4"/><path d="M76.3,101.8 L77.7,97.7"/></g><g fill="none" stroke="#333" stroke-width="1.6" stroke-linecap="round" stroke-linejoin="round" stroke="#333"><path d="M75,159 H66.3 Q64,159 64,156.7 V141.2 Q64,138.9 66.3,138.9 H82.8 Q85.1,138.9 85.1,141.2 V148.9 M64,145.6 H85.1"/></g><g fill="none" stroke="#68b04a" stroke-width="1.6" stroke-linecap="round"><path d="M67,142.3 H71.2 M78.7,142.3 H82.6"/><circle cx="83.9" cy="157.1" r="5.5"/></g><path d="M83.6,153.6 V157.3 L86.4,158.9" fill="none" stroke="#333" stroke-width="1.5" stroke-linecap="round" stroke-linejoin="round"/><g fill="none" stroke="#333" stroke-width="1.6" stroke-linecap="round" stroke-linejoin="round" stroke="#333"><path d="M75,211 H66.3 Q64,211 64,208.7 V193.2 Q64,190.9 66.3,190.9 H82.8 Q85.1,190.9 85.1,193.2 V200.9 M64,197.6 H85.1"/></g><g fill="none" stroke="#68b04a" stroke-width="1.6" stroke-linecap="round"><path d="M67,194.3 H71.2 M78.7,194.3 H82.6"/><circle cx="83.9" cy="209.1" r="5.5"/></g><path d="M83.6,205.6 V209.3 L86.4,210.9" fill="none" stroke="#333" stroke-width="1.5" stroke-linecap="round" stroke-linejoin="round"/><path d="M67.7,256.5 V246.7 Q67.7,244.7 69.7,244.7 H76.10000000000001 L82.3,250.89999999999998 V261.3 Q82.3,263.3 80.3,263.3 H74.5" fill="none" stroke="#333" stroke-width="1.6" stroke-linecap="round" stroke-linejoin="round"/><path d="M76.10000000000001,244.7 V250.29999999999998 H82.3" fill="none" stroke="#333" stroke-width="1.6" stroke-linecap="round" stroke-linejoin="round"/><path d="M71.2,254.8 V265.8 M65.7,260.3 H76.7" stroke="#d9463a" stroke-width="1.6" fill="none"/><path d="M67.7,308.5 V298.7 Q67.7,296.7 69.7,296.7 H76.10000000000001 L82.3,302.9 V313.3 Q82.3,315.3 80.3,315.3 H74.5" fill="none" stroke="#333" stroke-width="1.6" stroke-linecap="round" stroke-linejoin="round"/><path d="M76.10000000000001,296.7 V302.3 H82.3" fill="none" stroke="#333" stroke-width="1.6" stroke-linecap="round" stroke-linejoin="round"/><g fill="none" stroke="#9b4fd3" stroke-width="1.6" stroke-linecap="round"><circle cx="74" cy="309" r="4.3"/><path d="M70.9,312.1 L67,316"/></g><path d="M176.7,110.39999999999999 V100.6 Q176.7,98.6 178.7,98.6 H185.1 L191.29999999999998,104.8 V115.19999999999999 Q191.29999999999998,117.19999999999999 189.29999999999998,117.19999999999999 H183.5" fill="none" stroke="#333" stroke-width="1.6" stroke-linecap="round" stroke-linejoin="round"/><path d="M185.1,98.6 V104.19999999999999 H191.29999999999998" fill="none" stroke="#333" stroke-width="1.6" stroke-linecap="round" stroke-linejoin="round"/><g fill="none" stroke="#9b4fd3" stroke-width="1.6" stroke-linecap="round"><circle cx="182.8" cy="110.9" r="4.3"/><path d="M179.7,114 L175.8,117.9"/></g><g fill="none" stroke="#333" stroke-width="1.6" stroke-linecap="round" stroke-linejoin="round"><circle cx="73" cy="351.9" r="4.2"/><path d="M65,366 V364 Q65,359.6 69.4,359.6 H76.6 Q81,359.6 81,364 V366"/></g><g fill="none" stroke="#e6a82e" stroke-width="1.6" stroke-linecap="round"><path d="M79.6,347.6 Q83.6,348.3 83.6,352 Q83.6,355.7 79.6,356.4"/><path d="M84,359.9 Q87.1,361.3 87.1,366"/></g><g fill="none" stroke="#333" stroke-width="1.6" stroke-linecap="round" stroke-linejoin="round" stroke-linecap="butt"><path d="M64.9,413.6 V418.8 M71,409 V418.8 M77.5,410.6 V418.8 M84.2,406.2 V418.8"/></g><g fill="none" stroke="#d56a4e" stroke-width="1.6" stroke-linecap="round" stroke-linejoin="round"><path d="M64.2,410.3 L72,402.7 L77.2,407.6 L86.3,398.3"/><path d="M80.6,398 H86.5 V404"/></g><polygon points="86.30,461.40 86.30,461.49 86.29,461.59 86.28,461.68 86.26,461.78 86.23,461.87 86.20,461.96 86.17,462.05 86.13,462.14 86.08,462.23 86.03,462.32 85.97,462.41 85.91,462.49 85.84,462.58 85.77,462.66 85.68,462.74 85.60,462.82 85.50,462.89 85.39,462.97 85.28,463.04 85.14,463.10 84.99,463.16 84.78,463.20 84.36,463.20 84.16,463.24 84.00,463.28 83.87,463.33 83.75,463.38 83.64,463.43 83.54,463.48 83.45,463.53 83.36,463.58 83.28,463.63 83.20,463.68 83.13,463.73 83.06,463.78 83.00,463.84 82.94,463.89 82.89,463.94 82.84,464.00 82.79,464.05 82.75,464.11 82.71,464.17 82.67,464.23 82.64,464.29 82.61,464.35 82.59,464.41 82.57,464.47 82.55,464.54 82.54,464.61 82.53,464.68 82.52,464.75 82.52,464.82 82.52,464.90 82.53,464.98 82.53,465.06 82.54,465.15 82.56,465.23 82.58,465.32 82.60,465.42 82.63,465.51 82.66,465.62 82.69,465.72 82.73,465.83 82.78,465.95 82.84,466.08 82.92,466.22 83.04,466.39 83.34,466.69 83.45,466.87 83.52,467.02 83.57,467.16 83.60,467.29 83.63,467.41 83.64,467.54 83.65,467.65 83.65,467.77 83.65,467.88 83.64,467.99 83.62,468.09 83.60,468.19 83.57,468.29 83.54,468.39 83.51,468.48 83.47,468.57 83.42,468.66 83.37,468.74 83.32,468.82 83.26,468.90 83.20,468.97 83.14,469.04 83.07,469.10 83.00,469.16 82.92,469.22 82.84,469.27 82.76,469.32 82.67,469.37 82.58,469.41 82.49,469.44 82.39,469.47 82.29,469.50 82.19,469.52 82.09,469.54 81.98,469.55 81.87,469.55 81.75,469.55 81.64,469.54 81.51,469.53 81.39,469.50 81.26,469.47 81.12,469.42 80.97,469.35 80.79,469.24 80.49,468.94 80.32,468.82 80.18,468.74 80.05,468.68 79.93,468.63 79.82,468.59 79.72,468.56 79.61,468.53 79.52,468.50 79.42,468.48 79.33,468.46 79.25,468.44 79.16,468.43 79.08,468.43 79.00,468.42 78.92,468.42 78.85,468.42 78.78,468.43 78.71,468.44 78.64,468.45 78.57,468.47 78.51,468.49 78.45,468.51 78.39,468.54 78.33,468.57 78.27,468.61 78.21,468.65 78.15,468.69 78.10,468.74 78.04,468.79 77.99,468.84 77.94,468.90 77.88,468.96 77.83,469.03 77.78,469.10 77.73,469.18 77.68,469.26 77.63,469.35 77.58,469.44 77.53,469.54 77.48,469.65 77.43,469.77 77.38,469.90 77.34,470.06 77.30,470.26 77.30,470.68 77.26,470.89 77.20,471.04 77.14,471.18 77.07,471.29 76.99,471.40 76.92,471.50 76.84,471.58 76.76,471.67 76.68,471.74 76.59,471.81 76.51,471.87 76.42,471.93 76.33,471.98 76.24,472.03 76.15,472.07 76.06,472.10 75.97,472.13 75.88,472.16 75.78,472.18 75.69,472.19 75.59,472.20 75.50,472.20 75.41,472.20 75.31,472.19 75.22,472.18 75.12,472.16 75.03,472.13 74.94,472.10 74.85,472.07 74.76,472.03 74.67,471.98 74.58,471.93 74.49,471.87 74.41,471.81 74.32,471.74 74.24,471.67 74.16,471.58 74.08,471.50 74.01,471.40 73.93,471.29 73.86,471.18 73.80,471.04 73.74,470.89 73.70,470.68 73.70,470.26 73.66,470.06 73.62,469.90 73.57,469.77 73.52,469.65 73.47,469.54 73.42,469.44 73.37,469.35 73.32,469.26 73.27,469.18 73.22,469.10 73.17,469.03 73.12,468.96 73.06,468.90 73.01,468.84 72.96,468.79 72.90,468.74 72.85,468.69 72.79,468.65 72.73,468.61 72.67,468.57 72.61,468.54 72.55,468.51 72.49,468.49 72.43,468.47 72.36,468.45 72.29,468.44 72.22,468.43 72.15,468.42 72.08,468.42 72.00,468.42 71.92,468.43 71.84,468.43 71.75,468.44 71.67,468.46 71.58,468.48 71.48,468.50 71.39,468.53 71.28,468.56 71.18,468.59 71.07,468.63 70.95,468.68 70.82,468.74 70.68,468.82 70.51,468.94 70.21,469.24 70.03,469.35 69.88,469.42 69.74,469.47 69.61,469.50 69.49,469.53 69.36,469.54 69.25,469.55 69.13,469.55 69.02,469.55 68.91,469.54 68.81,469.52 68.71,469.50 68.61,469.47 68.51,469.44 68.42,469.41 68.33,469.37 68.24,469.32 68.16,469.27 68.08,469.22 68.00,469.16 67.93,469.10 67.86,469.04 67.80,468.97 67.74,468.90 67.68,468.82 67.63,468.74 67.58,468.66 67.53,468.57 67.49,468.48 67.46,468.39 67.43,468.29 67.40,468.19 67.38,468.09 67.36,467.99 67.35,467.88 67.35,467.77 67.35,467.65 67.36,467.54 67.37,467.41 67.40,467.29 67.43,467.16 67.48,467.02 67.55,466.87 67.66,466.69 67.96,466.39 68.08,466.22 68.16,466.08 68.22,465.95 68.27,465.83 68.31,465.72 68.34,465.62 68.37,465.51 68.40,465.42 68.42,465.32 68.44,465.23 68.46,465.15 68.47,465.06 68.47,464.98 68.48,464.90 68.48,464.82 68.48,464.75 68.47,464.68 68.46,464.61 68.45,464.54 68.43,464.47 68.41,464.41 68.39,464.35 68.36,464.29 68.33,464.23 68.29,464.17 68.25,464.11 68.21,464.05 68.16,464.00 68.11,463.94 68.06,463.89 68.00,463.84 67.94,463.78 67.87,463.73 67.80,463.68 67.72,463.63 67.64,463.58 67.55,463.53 67.46,463.48 67.36,463.43 67.25,463.38 67.13,463.33 67.00,463.28 66.84,463.24 66.64,463.20 66.22,463.20 66.01,463.16 65.86,463.10 65.72,463.04 65.61,462.97 65.50,462.89 65.40,462.82 65.32,462.74 65.23,462.66 65.16,462.58 65.09,462.49 65.03,462.41 64.97,462.32 64.92,462.23 64.87,462.14 64.83,462.05 64.80,461.96 64.77,461.87 64.74,461.78 64.72,461.68 64.71,461.59 64.70,461.49 64.70,461.40 64.70,461.31 64.71,461.21 64.72,461.12 64.74,461.02 64.77,460.93 64.80,460.84 64.83,460.75 64.87,460.66 64.92,460.57 64.97,460.48 65.03,460.39 65.09,460.31 65.16,460.22 65.23,460.14 65.32,460.06 65.40,459.98 65.50,459.91 65.61,459.83 65.72,459.76 65.86,459.70 66.01,459.64 66.22,459.60 66.64,459.60 66.84,459.56 67.00,459.52 67.13,459.47 67.25,459.42 67.36,459.37 67.46,459.32 67.55,459.27 67.64,459.22 67.72,459.17 67.80,459.12 67.87,459.07 67.94,459.02 68.00,458.96 68.06,458.91 68.11,458.86 68.16,458.80 68.21,458.75 68.25,458.69 68.29,458.63 68.33,458.57 68.36,458.51 68.39,458.45 68.41,458.39 68.43,458.33 68.45,458.26 68.46,458.19 68.47,458.12 68.48,458.05 68.48,457.98 68.48,457.90 68.47,457.82 68.47,457.74 68.46,457.65 68.44,457.57 68.42,457.48 68.40,457.38 68.37,457.29 68.34,457.18 68.31,457.08 68.27,456.97 68.22,456.85 68.16,456.72 68.08,456.58 67.96,456.41 67.66,456.11 67.55,455.93 67.48,455.78 67.43,455.64 67.40,455.51 67.37,455.39 67.36,455.26 67.35,455.15 67.35,455.03 67.35,454.92 67.36,454.81 67.38,454.71 67.40,454.61 67.43,454.51 67.46,454.41 67.49,454.32 67.53,454.23 67.58,454.14 67.63,454.06 67.68,453.98 67.74,453.90 67.80,453.83 67.86,453.76 67.93,453.70 68.00,453.64 68.08,453.58 68.16,453.53 68.24,453.48 68.33,453.43 68.42,453.39 68.51,453.36 68.61,453.33 68.71,453.30 68.81,453.28 68.91,453.26 69.02,453.25 69.13,453.25 69.25,453.25 69.36,453.26 69.49,453.27 69.61,453.30 69.74,453.33 69.88,453.38 70.03,453.45 70.21,453.56 70.51,453.86 70.68,453.98 70.82,454.06 70.95,454.12 71.07,454.17 71.18,454.21 71.28,454.24 71.39,454.27 71.48,454.30 71.58,454.32 71.67,454.34 71.75,454.36 71.84,454.37 71.92,454.37 72.00,454.38 72.08,454.38 72.15,454.38 72.22,454.37 72.29,454.36 72.36,454.35 72.43,454.33 72.49,454.31 72.55,454.29 72.61,454.26 72.67,454.23 72.73,454.19 72.79,454.15 72.85,454.11 72.90,454.06 72.96,454.01 73.01,453.96 73.06,453.90 73.12,453.84 73.17,453.77 73.22,453.70 73.27,453.62 73.32,453.54 73.37,453.45 73.42,453.36 73.47,453.26 73.52,453.15 73.57,453.03 73.62,452.90 73.66,452.74 73.70,452.54 73.70,452.12 73.74,451.91 73.80,451.76 73.86,451.62 73.93,451.51 74.01,451.40 74.08,451.30 74.16,451.22 74.24,451.13 74.32,451.06 74.41,450.99 74.49,450.93 74.58,450.87 74.67,450.82 74.76,450.77 74.85,450.73 74.94,450.70 75.03,450.67 75.12,450.64 75.22,450.62 75.31,450.61 75.41,450.60 75.50,450.60 75.59,450.60 75.69,450.61 75.78,450.62 75.88,450.64 75.97,450.67 76.06,450.70 76.15,450.73 76.24,450.77 76.33,450.82 76.42,450.87 76.51,450.93 76.59,450.99 76.68,451.06 76.76,451.13 76.84,451.22 76.92,451.30 76.99,451.40 77.07,451.51 77.14,451.62 77.20,451.76 77.26,451.91 77.30,452.12 77.30,452.54 77.34,452.74 77.38,452.90 77.43,453.03 77.48,453.15 77.53,453.26 77.58,453.36 77.63,453.45 77.68,453.54 77.73,453.62 77.78,453.70 77.83,453.77 77.88,453.84 77.94,453.90 77.99,453.96 78.04,454.01 78.10,454.06 78.15,454.11 78.21,454.15 78.27,454.19 78.33,454.23 78.39,454.26 78.45,454.29 78.51,454.31 78.57,454.33 78.64,454.35 78.71,454.36 78.78,454.37 78.85,454.38 78.92,454.38 79.00,454.38 79.08,454.37 79.16,454.37 79.25,454.36 79.33,454.34 79.42,454.32 79.52,454.30 79.61,454.27 79.72,454.24 79.82,454.21 79.93,454.17 80.05,454.12 80.18,454.06 80.32,453.98 80.49,453.86 80.79,453.56 80.97,453.45 81.12,453.38 81.26,453.33 81.39,453.30 81.51,453.27 81.64,453.26 81.75,453.25 81.87,453.25 81.98,453.25 82.09,453.26 82.19,453.28 82.29,453.30 82.39,453.33 82.49,453.36 82.58,453.39 82.67,453.43 82.76,453.48 82.84,453.53 82.92,453.58 83.00,453.64 83.07,453.70 83.14,453.76 83.20,453.83 83.26,453.90 83.32,453.98 83.37,454.06 83.42,454.14 83.47,454.23 83.51,454.32 83.54,454.41 83.57,454.51 83.60,454.61 83.62,454.71 83.64,454.81 83.65,454.92 83.65,455.03 83.65,455.15 83.64,455.26 83.63,455.39 83.60,455.51 83.57,455.64 83.52,455.78 83.45,455.93 83.34,456.11 83.04,456.41 82.92,456.58 82.84,456.72 82.78,456.85 82.73,456.97 82.69,457.08 82.66,457.18 82.63,457.29 82.60,457.38 82.58,457.48 82.56,457.57 82.54,457.65 82.53,457.74 82.53,457.82 82.52,457.90 82.52,457.98 82.52,458.05 82.53,458.12 82.54,458.19 82.55,458.26 82.57,458.33 82.59,458.39 82.61,458.45 82.64,458.51 82.67,458.57 82.71,458.63 82.75,458.69 82.79,458.75 82.84,458.80 82.89,458.86 82.94,458.91 83.00,458.96 83.06,459.02 83.13,459.07 83.20,459.12 83.28,459.17 83.36,459.22 83.45,459.27 83.54,459.32 83.64,459.37 83.75,459.42 83.87,459.47 84.00,459.52 84.16,459.56 84.36,459.60 84.78,459.60 84.99,459.64 85.14,459.70 85.28,459.76 85.39,459.83 85.50,459.91 85.60,459.98 85.68,460.06 85.77,460.14 85.84,460.22 85.91,460.31 85.97,460.39 86.03,460.48 86.08,460.57 86.13,460.66 86.17,460.75 86.20,460.84 86.23,460.93 86.26,461.02 86.28,461.12 86.29,461.21 86.30,461.31" fill="none" stroke="#222" stroke-width="1.6" stroke-linejoin="round"/><circle cx="75.5" cy="461.4" r="3.2" fill="none" stroke="#2a7fc8" stroke-width="1.6"/><g fill="none" stroke="#333" stroke-width="1.6" stroke-linecap="round" stroke-linejoin="round"><path d="M75.4,505.6 H67.6 Q65.8,505.6 65.8,507.4 V520.2 Q65.8,522.2 67.8,522.2 H83.6 Q85.5,522.2 85.5,520.2 V514.2"/><path d="M65.8,511.2 H71"/></g><g fill="none" stroke="#e6a82e" stroke-width="1.5" stroke-linecap="round" stroke-linejoin="round"><path d="M67.9,508.2 H71.4"/><path d="M75,514.4 L75.6,510.8 L85.6,500.8 Q86.9,499.8 88,500.9 Q89.1,502 88.1,503.2 L78.1,513.2 Z"/></g><g fill="none" stroke="#333" stroke-width="1.6" stroke-linecap="round" stroke-linejoin="round" stroke="#222"><path d="M75,554.9 L83.5,559.9 V570.1 L75,575.1 L66.5,570.1 V559.9 Z"/><path d="M66.5,559.9 L75,564.7 L83.5,559.9 M75,564.7 V575.1"/></g><path d="M70.4,556.8 L79.6,562.1 V573" fill="none" stroke="#e6a82e" stroke-width="1.5"/><defs><linearGradient id="wg" x1="0" y1="0" x2="1" y2="1"><stop offset="0" stop-color="#ffffff"/><stop offset="1" stop-color="#cfe9b8"/></linearGradient><linearGradient id="tb" x1="0" y1="0" x2="0" y2="1"><stop offset="0" stop-color="#8ab4f8"/><stop offset="1" stop-color="#2c5fd6"/></linearGradient><linearGradient id="dg" x1="0" y1="0" x2="1" y2="1"><stop offset="0" stop-color="#ffffff"/><stop offset="0.6" stop-color="#f2f4fa"/><stop offset="1" stop-color="#c9d2e6"/></linearGradient></defs><rect x="182.5" y="204.5" width="13.5" height="12.5" fill="url(#wg)" stroke="#8fa6c8" stroke-width="1"/><path d="M196,205 V217 H185" fill="none" stroke="#1f3a66" stroke-width="1.3"/><rect x="182.5" y="204.5" width="13.5" height="2.5" fill="url(#tb)"/><path d="M188,209.5 H194 M188,211.5 H194 M189,213.5 H194" stroke="#4d77b5" stroke-width="1"/><path d="M186.5,214 L190.3,217.8" stroke="#6b4a10" stroke-width="3.4" stroke-linecap="round"/><path d="M186.7,214.2 L190.1,217.6" stroke="#f0b830" stroke-width="1.8" stroke-linecap="round"/><circle cx="184.2" cy="211.8" r="3.6" fill="#d6eefa" stroke="#5d6670" stroke-width="1.2"/><path d="M182.6,211 Q183,209.6 184.4,209.4" stroke="#fff" stroke-width="1" fill="none"/><path d="M186.5,225.5 H193.2 L196.5,228.8 V237.5 H186.5 Z" fill="url(#dg)" stroke="#9aa8c0" stroke-width="1"/><path d="M196.4,228.6 V237.4 H187" fill="none" stroke="#1c2f4d" stroke-width="1.4"/><path d="M193.2,225.6 L196.5,228.9" fill="none" stroke="#2a3a55" stroke-width="1.1"/><path d="M193.6,226.4 V228.3 H195.6" fill="none" stroke="#c8d0de" stroke-width="0.8"/><rect x="182.5" y="249.5" width="13.5" height="12.5" fill="url(#wg)" stroke="#8fa6c8" stroke-width="1"/><path d="M196,250 V262 H185" fill="none" stroke="#1f3a66" stroke-width="1.3"/><rect x="182.5" y="249.5" width="13.5" height="2.5" fill="url(#tb)"/><path d="M188,254.5 H194 M188,256.5 H194 M189,258.5 H194" stroke="#4d77b5" stroke-width="1"/><path d="M186.5,259 L190.3,262.8" stroke="#6b4a10" stroke-width="3.4" stroke-linecap="round"/><path d="M186.7,259.2 L190.1,262.6" stroke="#f0b830" stroke-width="1.8" stroke-linecap="round"/><circle cx="184.2" cy="256.8" r="3.6" fill="#d6eefa" stroke="#5d6670" stroke-width="1.2"/><path d="M182.6,256 Q183,254.6 184.4,254.4" stroke="#fff" stroke-width="1" fill="none"/><path d="M186.5,270.5 H193.2 L196.5,273.8 V282.5 H186.5 Z" fill="url(#dg)" stroke="#9aa8c0" stroke-width="1"/><path d="M196.4,273.6 V282.4 H187" fill="none" stroke="#1c2f4d" stroke-width="1.4"/><path d="M193.2,270.6 L196.5,273.9" fill="none" stroke="#2a3a55" stroke-width="1.1"/><path d="M193.6,271.4 V273.3 H195.6" fill="none" stroke="#c8d0de" stroke-width="0.8"/><rect x="182.5" y="291.5" width="13.5" height="12.5" fill="url(#wg)" stroke="#8fa6c8" stroke-width="1"/><path d="M196,292 V304 H185" fill="none" stroke="#1f3a66" stroke-width="1.3"/><rect x="182.5" y="291.5" width="13.5" height="2.5" fill="url(#tb)"/><path d="M188,296.5 H194 M188,298.5 H194 M189,300.5 H194" stroke="#4d77b5" stroke-width="1"/><path d="M186.5,301 L190.3,304.8" stroke="#6b4a10" stroke-width="3.4" stroke-linecap="round"/><path d="M186.7,301.2 L190.1,304.6" stroke="#f0b830" stroke-width="1.8" stroke-linecap="round"/><circle cx="184.2" cy="298.8" r="3.6" fill="#d6eefa" stroke="#5d6670" stroke-width="1.2"/><path d="M182.6,298 Q183,296.6 184.4,296.4" stroke="#fff" stroke-width="1" fill="none"/><path d="M186.5,312.5 H193.2 L196.5,315.8 V324.5 H186.5 Z" fill="url(#dg)" stroke="#9aa8c0" stroke-width="1"/><path d="M196.4,315.6 V324.4 H187" fill="none" stroke="#1c2f4d" stroke-width="1.4"/><path d="M193.2,312.6 L196.5,315.9" fill="none" stroke="#2a3a55" stroke-width="1.1"/><path d="M193.6,313.4 V315.3 H195.6" fill="none" stroke="#c8d0de" stroke-width="0.8"/><rect x="182.5" y="333.5" width="13.5" height="12.5" fill="url(#wg)" stroke="#8fa6c8" stroke-width="1"/><path d="M196,334 V346 H185" fill="none" stroke="#1f3a66" stroke-width="1.3"/><rect x="182.5" y="333.5" width="13.5" height="2.5" fill="url(#tb)"/><path d="M188,338.5 H194 M188,340.5 H194 M189,342.5 H194" stroke="#4d77b5" stroke-width="1"/><path d="M186.5,343 L190.3,346.8" stroke="#6b4a10" stroke-width="3.4" stroke-linecap="round"/><path d="M186.7,343.2 L190.1,346.6" stroke="#f0b830" stroke-width="1.8" stroke-linecap="round"/><circle cx="184.2" cy="340.8" r="3.6" fill="#d6eefa" stroke="#5d6670" stroke-width="1.2"/><path d="M182.6,340 Q183,338.6 184.4,338.4" stroke="#fff" stroke-width="1" fill="none"/><path d="M186.5,354.5 H193.2 L196.5,357.8 V366.5 H186.5 Z" fill="url(#dg)" stroke="#9aa8c0" stroke-width="1"/><path d="M196.4,357.6 V366.4 H187" fill="none" stroke="#1c2f4d" stroke-width="1.4"/><path d="M193.2,354.6 L196.5,357.9" fill="none" stroke="#2a3a55" stroke-width="1.1"/><path d="M193.6,355.4 V357.3 H195.6" fill="none" stroke="#c8d0de" stroke-width="0.8"/><rect x="182.5" y="375.5" width="13.5" height="12.5" fill="url(#wg)" stroke="#8fa6c8" stroke-width="1"/><path d="M196,376 V388 H185" fill="none" stroke="#1f3a66" stroke-width="1.3"/><rect x="182.5" y="375.5" width="13.5" height="2.5" fill="url(#tb)"/><path d="M188,380.5 H194 M188,382.5 H194 M189,384.5 H194" stroke="#4d77b5" stroke-width="1"/><path d="M186.5,385 L190.3,388.8" stroke="#6b4a10" stroke-width="3.4" stroke-linecap="round"/><path d="M186.7,385.2 L190.1,388.6" stroke="#f0b830" stroke-width="1.8" stroke-linecap="round"/><circle cx="184.2" cy="382.8" r="3.6" fill="#d6eefa" stroke="#5d6670" stroke-width="1.2"/><path d="M182.6,382 Q183,380.6 184.4,380.4" stroke="#fff" stroke-width="1" fill="none"/><path d="M186.5,396.5 H193.2 L196.5,399.8 V408.5 H186.5 Z" fill="url(#dg)" stroke="#9aa8c0" stroke-width="1"/><path d="M196.4,399.6 V408.4 H187" fill="none" stroke="#1c2f4d" stroke-width="1.4"/><path d="M193.2,396.6 L196.5,399.9" fill="none" stroke="#2a3a55" stroke-width="1.1"/><path d="M193.6,397.4 V399.3 H195.6" fill="none" stroke="#c8d0de" stroke-width="0.8"/><rect x="182.5" y="420.5" width="13.5" height="12.5" fill="url(#wg)" stroke="#8fa6c8" stroke-width="1"/><path d="M196,421 V433 H185" fill="none" stroke="#1f3a66" stroke-width="1.3"/><rect x="182.5" y="420.5" width="13.5" height="2.5" fill="url(#tb)"/><path d="M188,425.5 H194 M188,427.5 H194 M189,429.5 H194" stroke="#4d77b5" stroke-width="1"/><path d="M186.5,430 L190.3,433.8" stroke="#6b4a10" stroke-width="3.4" stroke-linecap="round"/><path d="M186.7,430.2 L190.1,433.6" stroke="#f0b830" stroke-width="1.8" stroke-linecap="round"/><circle cx="184.2" cy="427.8" r="3.6" fill="#d6eefa" stroke="#5d6670" stroke-width="1.2"/><path d="M182.6,427 Q183,425.6 184.4,425.4" stroke="#fff" stroke-width="1" fill="none"/><path d="M186.5,441.5 H193.2 L196.5,444.8 V453.5 H186.5 Z" fill="url(#dg)" stroke="#9aa8c0" stroke-width="1"/><path d="M196.4,444.6 V453.4 H187" fill="none" stroke="#1c2f4d" stroke-width="1.4"/><path d="M193.2,441.6 L196.5,444.9" fill="none" stroke="#2a3a55" stroke-width="1.1"/><path d="M193.6,442.4 V444.3 H195.6" fill="none" stroke="#c8d0de" stroke-width="0.8"/><rect x="182.5" y="468.5" width="13.5" height="12.5" fill="url(#wg)" stroke="#8fa6c8" stroke-width="1"/><path d="M196,469 V481 H185" fill="none" stroke="#1f3a66" stroke-width="1.3"/><rect x="182.5" y="468.5" width="13.5" height="2.5" fill="url(#tb)"/><path d="M188,473.5 H194 M188,475.5 H194 M189,477.5 H194" stroke="#4d77b5" stroke-width="1"/><path d="M186.5,478 L190.3,481.8" stroke="#6b4a10" stroke-width="3.4" stroke-linecap="round"/><path d="M186.7,478.2 L190.1,481.6" stroke="#f0b830" stroke-width="1.8" stroke-linecap="round"/><circle cx="184.2" cy="475.8" r="3.6" fill="#d6eefa" stroke="#5d6670" stroke-width="1.2"/><path d="M182.6,475 Q183,473.6 184.4,473.4" stroke="#fff" stroke-width="1" fill="none"/><path d="M186.5,489.5 H193.2 L196.5,492.8 V501.5 H186.5 Z" fill="url(#dg)" stroke="#9aa8c0" stroke-width="1"/><path d="M196.4,492.6 V501.4 H187" fill="none" stroke="#1c2f4d" stroke-width="1.4"/><path d="M193.2,489.6 L196.5,492.9" fill="none" stroke="#2a3a55" stroke-width="1.1"/><path d="M193.6,490.4 V492.3 H195.6" fill="none" stroke="#c8d0de" stroke-width="0.8"/><rect x="182.5" y="516.5" width="13.5" height="12.5" fill="url(#wg)" stroke="#8fa6c8" stroke-width="1"/><path d="M196,517 V529 H185" fill="none" stroke="#1f3a66" stroke-width="1.3"/><rect x="182.5" y="516.5" width="13.5" height="2.5" fill="url(#tb)"/><path d="M188,521.5 H194 M188,523.5 H194 M189,525.5 H194" stroke="#4d77b5" stroke-width="1"/><path d="M186.5,526 L190.3,529.8" stroke="#6b4a10" stroke-width="3.4" stroke-linecap="round"/><path d="M186.7,526.2 L190.1,529.6" stroke="#f0b830" stroke-width="1.8" stroke-linecap="round"/><circle cx="184.2" cy="523.8" r="3.6" fill="#d6eefa" stroke="#5d6670" stroke-width="1.2"/><path d="M182.6,523 Q183,521.6 184.4,521.4" stroke="#fff" stroke-width="1" fill="none"/><path d="M186.5,537.5 H193.2 L196.5,540.8 V549.5 H186.5 Z" fill="url(#dg)" stroke="#9aa8c0" stroke-width="1"/><path d="M196.4,540.6 V549.4 H187" fill="none" stroke="#1c2f4d" stroke-width="1.4"/><path d="M193.2,537.6 L196.5,540.9" fill="none" stroke="#2a3a55" stroke-width="1.1"/><path d="M193.6,538.4 V540.3 H195.6" fill="none" stroke="#c8d0de" stroke-width="0.8"/><rect x="182.5" y="561.5" width="13.5" height="12.5" fill="url(#wg)" stroke="#8fa6c8" stroke-width="1"/><path d="M196,562 V574 H185" fill="none" stroke="#1f3a66" stroke-width="1.3"/><rect x="182.5" y="561.5" width="13.5" height="2.5" fill="url(#tb)"/><path d="M188,566.5 H194 M188,568.5 H194 M189,570.5 H194" stroke="#4d77b5" stroke-width="1"/><path d="M186.5,571 L190.3,574.8" stroke="#6b4a10" stroke-width="3.4" stroke-linecap="round"/><path d="M186.7,571.2 L190.1,574.6" stroke="#f0b830" stroke-width="1.8" stroke-linecap="round"/><circle cx="184.2" cy="568.8" r="3.6" fill="#d6eefa" stroke="#5d6670" stroke-width="1.2"/><path d="M182.6,568 Q183,566.6 184.4,566.4" stroke="#fff" stroke-width="1" fill="none"/><path d="M186.5,582.5 H193.2 L196.5,585.8 V594.5 H186.5 Z" fill="url(#dg)" stroke="#9aa8c0" stroke-width="1"/><path d="M196.4,585.6 V594.4 H187" fill="none" stroke="#1c2f4d" stroke-width="1.4"/><path d="M193.2,582.6 L196.5,585.9" fill="none" stroke="#2a3a55" stroke-width="1.1"/><path d="M193.6,583.4 V585.3 H195.6" fill="none" stroke="#c8d0de" stroke-width="0.8"/><rect x="182.5" y="603.5" width="13.5" height="12.5" fill="url(#wg)" stroke="#8fa6c8" stroke-width="1"/><path d="M196,604 V616 H185" fill="none" stroke="#1f3a66" stroke-width="1.3"/><rect x="182.5" y="603.5" width="13.5" height="2.5" fill="url(#tb)"/><path d="M188,608.5 H194 M188,610.5 H194 M189,612.5 H194" stroke="#4d77b5" stroke-width="1"/><path d="M186.5,613 L190.3,616.8" stroke="#6b4a10" stroke-width="3.4" stroke-linecap="round"/><path d="M186.7,613.2 L190.1,616.6" stroke="#f0b830" stroke-width="1.8" stroke-linecap="round"/><circle cx="184.2" cy="610.8" r="3.6" fill="#d6eefa" stroke="#5d6670" stroke-width="1.2"/><path d="M182.6,610 Q183,608.6 184.4,608.4" stroke="#fff" stroke-width="1" fill="none"/><path d="M186.5,624.5 H193.2 L196.5,627.8 V636.5 H186.5 Z" fill="url(#dg)" stroke="#9aa8c0" stroke-width="1"/><path d="M196.4,627.6 V636.4 H187" fill="none" stroke="#1c2f4d" stroke-width="1.4"/><path d="M193.2,624.6 L196.5,627.9" fill="none" stroke="#2a3a55" stroke-width="1.1"/><path d="M193.6,625.4 V627.3 H195.6" fill="none" stroke="#c8d0de" stroke-width="0.8"/><rect x="182.5" y="648.5" width="13.5" height="12.5" fill="url(#wg)" stroke="#8fa6c8" stroke-width="1"/><path d="M196,649 V661 H185" fill="none" stroke="#1f3a66" stroke-width="1.3"/><rect x="182.5" y="648.5" width="13.5" height="2.5" fill="url(#tb)"/><path d="M188,653.5 H194 M188,655.5 H194 M189,657.5 H194" stroke="#4d77b5" stroke-width="1"/><path d="M186.5,658 L190.3,661.8" stroke="#6b4a10" stroke-width="3.4" stroke-linecap="round"/><path d="M186.7,658.2 L190.1,661.6" stroke="#f0b830" stroke-width="1.8" stroke-linecap="round"/><circle cx="184.2" cy="655.8" r="3.6" fill="#d6eefa" stroke="#5d6670" stroke-width="1.2"/><path d="M182.6,655 Q183,653.6 184.4,653.4" stroke="#fff" stroke-width="1" fill="none"/><path d="M186.5,669.5 H193.2 L196.5,672.8 V681.5 H186.5 Z" fill="url(#dg)" stroke="#9aa8c0" stroke-width="1"/><path d="M196.4,672.6 V681.4 H187" fill="none" stroke="#1c2f4d" stroke-width="1.4"/><path d="M193.2,669.6 L196.5,672.9" fill="none" stroke="#2a3a55" stroke-width="1.1"/><path d="M193.6,670.4 V672.3 H195.6" fill="none" stroke="#c8d0de" stroke-width="0.8"/><rect x="182.5" y="696.5" width="13.5" height="12.5" fill="url(#wg)" stroke="#8fa6c8" stroke-width="1"/><path d="M196,697 V709 H185" fill="none" stroke="#1f3a66" stroke-width="1.3"/><rect x="182.5" y="696.5" width="13.5" height="2.5" fill="url(#tb)"/><path d="M188,701.5 H194 M188,703.5 H194 M189,705.5 H194" stroke="#4d77b5" stroke-width="1"/><path d="M186.5,706 L190.3,709.8" stroke="#6b4a10" stroke-width="3.4" stroke-linecap="round"/><path d="M186.7,706.2 L190.1,709.6" stroke="#f0b830" stroke-width="1.8" stroke-linecap="round"/><circle cx="184.2" cy="703.8" r="3.6" fill="#d6eefa" stroke="#5d6670" stroke-width="1.2"/><path d="M182.6,703 Q183,701.6 184.4,701.4" stroke="#fff" stroke-width="1" fill="none"/><path d="M186.5,717.5 H193.2 L196.5,720.8 V729.5 H186.5 Z" fill="url(#dg)" stroke="#9aa8c0" stroke-width="1"/><path d="M196.4,720.6 V729.4 H187" fill="none" stroke="#1c2f4d" stroke-width="1.4"/><path d="M193.2,717.6 L196.5,720.9" fill="none" stroke="#2a3a55" stroke-width="1.1"/><path d="M193.6,718.4 V720.3 H195.6" fill="none" stroke="#c8d0de" stroke-width="0.8"/><rect x="182.5" y="741.5" width="13.5" height="12.5" fill="url(#wg)" stroke="#8fa6c8" stroke-width="1"/><path d="M196,742 V754 H185" fill="none" stroke="#1f3a66" stroke-width="1.3"/><rect x="182.5" y="741.5" width="13.5" height="2.5" fill="url(#tb)"/><path d="M188,746.5 H194 M188,748.5 H194 M189,750.5 H194" stroke="#4d77b5" stroke-width="1"/><path d="M186.5,751 L190.3,754.8" stroke="#6b4a10" stroke-width="3.4" stroke-linecap="round"/><path d="M186.7,751.2 L190.1,754.6" stroke="#f0b830" stroke-width="1.8" stroke-linecap="round"/><circle cx="184.2" cy="748.8" r="3.6" fill="#d6eefa" stroke="#5d6670" stroke-width="1.2"/><path d="M182.6,748 Q183,746.6 184.4,746.4" stroke="#fff" stroke-width="1" fill="none"/><path d="M186.5,762.5 H193.2 L196.5,765.8 V774.5 H186.5 Z" fill="url(#dg)" stroke="#9aa8c0" stroke-width="1"/><path d="M196.4,765.6 V774.4 H187" fill="none" stroke="#1c2f4d" stroke-width="1.4"/><path d="M193.2,762.6 L196.5,765.9" fill="none" stroke="#2a3a55" stroke-width="1.1"/><path d="M193.6,763.4 V765.3 H195.6" fill="none" stroke="#c8d0de" stroke-width="0.8"/><rect x="182.5" y="783.5" width="13.5" height="12.5" fill="url(#wg)" stroke="#8fa6c8" stroke-width="1"/><path d="M196,784 V796 H185" fill="none" stroke="#1f3a66" stroke-width="1.3"/><rect x="182.5" y="783.5" width="13.5" height="2.5" fill="url(#tb)"/><path d="M188,788.5 H194 M188,790.5 H194 M189,792.5 H194" stroke="#4d77b5" stroke-width="1"/><path d="M186.5,793 L190.3,796.8" stroke="#6b4a10" stroke-width="3.4" stroke-linecap="round"/><path d="M186.7,793.2 L190.1,796.6" stroke="#f0b830" stroke-width="1.8" stroke-linecap="round"/><circle cx="184.2" cy="790.8" r="3.6" fill="#d6eefa" stroke="#5d6670" stroke-width="1.2"/><path d="M182.6,790 Q183,788.6 184.4,788.4" stroke="#fff" stroke-width="1" fill="none"/><path d="M186.5,804.5 H193.2 L196.5,807.8 V816.5 H186.5 Z" fill="url(#dg)" stroke="#9aa8c0" stroke-width="1"/><path d="M196.4,807.6 V816.4 H187" fill="none" stroke="#1c2f4d" stroke-width="1.4"/><path d="M193.2,804.6 L196.5,807.9" fill="none" stroke="#2a3a55" stroke-width="1.1"/><path d="M193.6,805.4 V807.3 H195.6" fill="none" stroke="#c8d0de" stroke-width="0.8"/><rect x="182.5" y="825.5" width="13.5" height="12.5" fill="url(#wg)" stroke="#8fa6c8" stroke-width="1"/><path d="M196,826 V838 H185" fill="none" stroke="#1f3a66" stroke-width="1.3"/><rect x="182.5" y="825.5" width="13.5" height="2.5" fill="url(#tb)"/><path d="M188,830.5 H194 M188,832.5 H194 M189,834.5 H194" stroke="#4d77b5" stroke-width="1"/><path d="M186.5,835 L190.3,838.8" stroke="#6b4a10" stroke-width="3.4" stroke-linecap="round"/><path d="M186.7,835.2 L190.1,838.6" stroke="#f0b830" stroke-width="1.8" stroke-linecap="round"/><circle cx="184.2" cy="832.8" r="3.6" fill="#d6eefa" stroke="#5d6670" stroke-width="1.2"/><path d="M182.6,832 Q183,830.6 184.4,830.4" stroke="#fff" stroke-width="1" fill="none"/><path d="M186.5,846.5 H193.2 L196.5,849.8 V858.5 H186.5 Z" fill="url(#dg)" stroke="#9aa8c0" stroke-width="1"/><path d="M196.4,849.6 V858.4 H187" fill="none" stroke="#1c2f4d" stroke-width="1.4"/><path d="M193.2,846.6 L196.5,849.9" fill="none" stroke="#2a3a55" stroke-width="1.1"/><path d="M193.6,847.4 V849.3 H195.6" fill="none" stroke="#c8d0de" stroke-width="0.8"/><path d="M1327.5,113.5 H1334.2 L1337.5,116.8 V125.5 H1327.5 Z" fill="url(#dg)" stroke="#9aa8c0" stroke-width="1"/><path d="M1337.4,116.6 V125.4 H1328" fill="none" stroke="#1c2f4d" stroke-width="1.4"/><path d="M1334.2,113.6 L1337.5,116.9" fill="none" stroke="#2a3a55" stroke-width="1.1"/><path d="M1334.6,114.4 V116.3 H1336.6" fill="none" stroke="#c8d0de" stroke-width="0.8"/><path d="M645.5,182.2 V189.8" stroke="#555" stroke-width="1.1"/><path d="M650.3,182.2 L646.5,186 L650.3,189.8 Z M654.3,182.2 L650.5,186 L654.3,189.8 Z" fill="#8a8a8a" stroke="#8a8a8a" stroke-width="0.4"/><path d="M650.3,182.2 L646.5,186 M654.3,182.2 L650.5,186" stroke="#555" stroke-width="0.9"/><path d="M698,182.2 L694.2,186 L698,189.8 Z" fill="#8a8a8a"/><path d="M698,182.2 L694.2,186" stroke="#555" stroke-width="0.9"/><path d="M888,182.2 L891.8,186 L888,189.8 Z" fill="#8a8a8a"/><path d="M888,182.2 L891.8,186" stroke="#555" stroke-width="0.9"/><path d="M924,182.2 L927.8,186 L924,189.8 Z M928,182.2 L931.8,186 L928,189.8 Z" fill="#8a8a8a" stroke="#8a8a8a" stroke-width="0.4"/><path d="M924,182.2 L927.8,186 M928,182.2 L931.8,186" stroke="#555" stroke-width="0.9"/><path d="M932.6,182.2 V189.8" stroke="#555" stroke-width="1.1"/><path d="M645.5,874.2 V881.8" stroke="#555" stroke-width="1.1"/><path d="M650.3,874.2 L646.5,878 L650.3,881.8 Z M654.3,874.2 L650.5,878 L654.3,881.8 Z" fill="#8a8a8a" stroke="#8a8a8a" stroke-width="0.4"/><path d="M650.3,874.2 L646.5,878 M654.3,874.2 L650.5,878" stroke="#555" stroke-width="0.9"/><path d="M698,874.2 L694.2,878 L698,881.8 Z" fill="#8a8a8a"/><path d="M698,874.2 L694.2,878" stroke="#555" stroke-width="0.9"/><path d="M888,874.2 L891.8,878 L888,881.8 Z" fill="#8a8a8a"/><path d="M888,874.2 L891.8,878" stroke="#555" stroke-width="0.9"/><path d="M924,874.2 L927.8,878 L924,881.8 Z M928,874.2 L931.8,878 L928,881.8 Z" fill="#8a8a8a" stroke="#8a8a8a" stroke-width="0.4"/><path d="M924,874.2 L927.8,878 M928,874.2 L931.8,878" stroke="#555" stroke-width="0.9"/><path d="M932.6,874.2 V881.8" stroke="#555" stroke-width="1.1"/><g fill="none" stroke="#8a8a8a" stroke-width="1"><circle cx="1445.5" cy="186.3" r="6.8"/><path d="M1441.8,186.3 H1449.2 M1445.5,182.6 V190"/><circle cx="1465.8" cy="186.3" r="6.8"/><path d="M1462.1,186.3 H1469.5"/></g><path d="M199,159.7 L203,156 L207,159.7 Z M199,161.4 L203,165 L207,161.4 Z" fill="#b4b4b4" stroke="#fff" stroke-width="0.8" stroke-linejoin="round"/><path d="M199.6,159.4 L203,156.2 L206.4,159.4 M199.3,161.6 H206.7" fill="none" stroke="#555" stroke-width="0.9"/><path d="M318,159.7 L322,156 L326,159.7 Z M318,161.4 L322,165 L326,161.4 Z" fill="#b4b4b4" stroke="#fff" stroke-width="0.8" stroke-linejoin="round"/><path d="M318.6,159.4 L322,156.2 L325.4,159.4 M318.3,161.6 H325.7" fill="none" stroke="#555" stroke-width="0.9"/><path d="M366,159.7 L370,156 L374,159.7 Z M366,161.4 L370,165 L374,161.4 Z" fill="#b4b4b4" stroke="#fff" stroke-width="0.8" stroke-linejoin="round"/><path d="M366.6,159.4 L370,156.2 L373.4,159.4 M366.3,161.6 H373.7" fill="none" stroke="#555" stroke-width="0.9"/><path d="M446,159.7 L450,156 L454,159.7 Z M446,161.4 L450,165 L454,161.4 Z" fill="#b4b4b4" stroke="#fff" stroke-width="0.8" stroke-linejoin="round"/><path d="M446.6,159.4 L450,156.2 L453.4,159.4 M446.3,161.6 H453.7" fill="none" stroke="#555" stroke-width="0.9"/><path d="M633,159.7 L637,156 L641,159.7 Z M633,161.4 L637,165 L641,161.4 Z" fill="#b4b4b4" stroke="#fff" stroke-width="0.8" stroke-linejoin="round"/><path d="M633.6,159.4 L637,156.2 L640.4,159.4 M633.3,161.6 H640.7" fill="none" stroke="#555" stroke-width="0.9"/><path d="M701,159.7 L705,156 L709,159.7 Z M701,161.4 L705,165 L709,161.4 Z" fill="#b4b4b4" stroke="#fff" stroke-width="0.8" stroke-linejoin="round"/><path d="M701.6,159.4 L705,156.2 L708.4,159.4 M701.3,161.6 H708.7" fill="none" stroke="#555" stroke-width="0.9"/><path d="M1289.8,67.6 L1294,71.8 L1298.2,67.6" fill="none" stroke="#111" stroke-width="1.8"/></svg>
<div class="a" style="left:28px;top:28.5px;font-size:10.2px;line-height:12px;color:#7a7a7a;white-space:nowrap;transform:scaleX(1.165);transform-origin:0 0;letter-spacing:0">Service Manager</div>
</body></html>
